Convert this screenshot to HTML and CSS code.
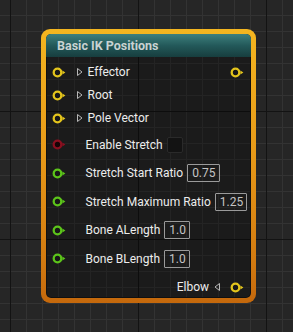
FILE: index.html
```html
<!DOCTYPE html>
<html>
    <head>
        <link rel="stylesheet" href="styles.css">
    </head>
    <body>
        <div class="node-frame">
            <div class="node">
                <div class="node-title">Basic IK Positions</div>
                <div class="node-pins">
                    <div class="pin-row">
                        <svg class="pin pin-vec" width="14" height="11" viewBox="0 0 14 11"><circle cx="5.5" cy="5.5" r="3.8" fill="#181818" stroke="currentColor" stroke-width="2.3"/><path d="M10.4 3.4 L13.4 5.5 L10.4 7.6 Z" fill="currentColor"/></svg>
                        <svg class="expander" width="6" height="8" viewBox="0 0 6 8"><path d="M0.5 0.5 L5 4 L0.5 7.5 Z" fill="none" stroke="#b8b8b8" stroke-width="1"/></svg>
                        <span class="label">Effector</span>
                        <svg class="pin pin-vec pin-out" width="14" height="11" viewBox="0 0 14 11"><circle cx="5.5" cy="5.5" r="3.8" fill="#181818" stroke="currentColor" stroke-width="2.3"/><path d="M10.4 3.4 L13.4 5.5 L10.4 7.6 Z" fill="currentColor"/></svg>
                    </div>
                    <div class="pin-row">
                        <svg class="pin pin-vec" width="14" height="11" viewBox="0 0 14 11"><circle cx="5.5" cy="5.5" r="3.8" fill="#181818" stroke="currentColor" stroke-width="2.3"/><path d="M10.4 3.4 L13.4 5.5 L10.4 7.6 Z" fill="currentColor"/></svg>
                        <svg class="expander" width="6" height="8" viewBox="0 0 6 8"><path d="M0.5 0.5 L5 4 L0.5 7.5 Z" fill="none" stroke="#b8b8b8" stroke-width="1"/></svg>
                        <span class="label">Root</span>
                    </div>
                    <div class="pin-row">
                        <svg class="pin pin-vec" width="14" height="11" viewBox="0 0 14 11"><circle cx="5.5" cy="5.5" r="3.8" fill="#181818" stroke="currentColor" stroke-width="2.3"/><path d="M10.4 3.4 L13.4 5.5 L10.4 7.6 Z" fill="currentColor"/></svg>
                        <svg class="expander" width="6" height="8" viewBox="0 0 6 8"><path d="M0.5 0.5 L5 4 L0.5 7.5 Z" fill="none" stroke="#b8b8b8" stroke-width="1"/></svg>
                        <span class="label">Pole Vector</span>
                    </div>
                    <div class="pin-row tall first-tall">
                        <svg class="pin pin-bool" width="14" height="11" viewBox="0 0 14 11"><circle cx="5.5" cy="5.5" r="3.8" fill="#160406" stroke="currentColor" stroke-width="2.3"/><path d="M10.4 3.4 L13.4 5.5 L10.4 7.6 Z" fill="currentColor"/></svg>
                        <span class="label plain">Enable Stretch</span>
                        <span class="check"></span>
                    </div>
                    <div class="pin-row tall">
                        <svg class="pin pin-float" width="14" height="11" viewBox="0 0 14 11"><circle cx="5.5" cy="5.5" r="3.8" fill="#181818" stroke="currentColor" stroke-width="2.3"/><path d="M10.4 3.4 L13.4 5.5 L10.4 7.6 Z" fill="currentColor"/></svg>
                        <span class="label plain">Stretch Start Ratio</span>
                        <span class="value">0.75</span>
                    </div>
                    <div class="pin-row tall">
                        <svg class="pin pin-float" width="14" height="11" viewBox="0 0 14 11"><circle cx="5.5" cy="5.5" r="3.8" fill="#181818" stroke="currentColor" stroke-width="2.3"/><path d="M10.4 3.4 L13.4 5.5 L10.4 7.6 Z" fill="currentColor"/></svg>
                        <span class="label plain">Stretch Maximum Ratio</span>
                        <span class="value">1.25</span>
                    </div>
                    <div class="pin-row tall">
                        <svg class="pin pin-float" width="14" height="11" viewBox="0 0 14 11"><circle cx="5.5" cy="5.5" r="3.8" fill="#181818" stroke="currentColor" stroke-width="2.3"/><path d="M10.4 3.4 L13.4 5.5 L10.4 7.6 Z" fill="currentColor"/></svg>
                        <span class="label plain">Bone ALength</span>
                        <span class="value">1.0</span>
                    </div>
                    <div class="pin-row tall">
                        <svg class="pin pin-float" width="14" height="11" viewBox="0 0 14 11"><circle cx="5.5" cy="5.5" r="3.8" fill="#181818" stroke="currentColor" stroke-width="2.3"/><path d="M10.4 3.4 L13.4 5.5 L10.4 7.6 Z" fill="currentColor"/></svg>
                        <span class="label plain">Bone BLength</span>
                        <span class="value">1.0</span>
                    </div>
                    <div class="pin-row out-row">
                        <span class="label">Elbow</span>
                        <svg class="collapser" width="6" height="8" viewBox="0 0 6 8"><path d="M5.5 0.5 L1 4 L5.5 7.5 Z" fill="none" stroke="#b8b8b8" stroke-width="1"/></svg>
                        <svg class="pin pin-vec" width="14" height="11" viewBox="0 0 14 11"><circle cx="5.5" cy="5.5" r="3.8" fill="#181818" stroke="currentColor" stroke-width="2.3"/><path d="M10.4 3.4 L13.4 5.5 L10.4 7.6 Z" fill="currentColor"/></svg>
                    </div>
                </div>
            </div>
        </div>
    </body>
</html>
```

FILE: styles.css
```css
* {
    font-family: Roboto, "Liberation Sans", sans-serif;
}

html {
    margin: 0;
}

body {
    margin: 0;
    padding: 29px 0 0 41px;
    width: 293px;
    height: 332px;
    box-sizing: border-box;
    overflow: hidden;
    background-color: #262626;
    background-image:
        linear-gradient(90deg, #131313 1px, transparent 1px),
        linear-gradient(#131313 1px, transparent 1px),
        linear-gradient(90deg, #333333 1px, transparent 1px),
        linear-gradient(#333333 1px, transparent 1px);
    background-size: 128px 128px, 128px 128px, 16px 16px, 16px 16px;
    background-position: 10px 0, 0 111px, 10px 0, 0 15px;
}

.node-frame {
    width: 215px;
    height: 274px;
    box-sizing: border-box;
    padding: 5px;
    border-radius: 9px;
    background: linear-gradient(#f4b620, #e89a18 45%, #d27a10 85%, #c4680c);
}

.node {
    height: 100%;
    border-radius: 5px;
    overflow: hidden;
    box-shadow: inset 0 0 0 1px #101010;
    background-color: #262626;
    background-image:
        linear-gradient(rgba(0, 0, 0, 0.3), rgba(0, 0, 0, 0.3)),
        linear-gradient(90deg, #131313 1px, transparent 1px),
        linear-gradient(#131313 1px, transparent 1px),
        linear-gradient(90deg, #333333 1px, transparent 1px),
        linear-gradient(#333333 1px, transparent 1px);
    background-size: 100% 100%, 128px 128px, 128px 128px, 16px 16px, 16px 16px;
    background-position: 0 0, 10px 0, 0 111px, 10px 0, 0 15px;
    background-attachment: fixed;
    display: flex;
    flex-direction: column;
}

.node-title {
    height: 23px;
    flex-shrink: 0;
    display: flex;
    align-items: center;
    padding-left: 11px;
    background: linear-gradient(#3e807d, #23595a 50%, #173e3e);
    color: #c8d3d2;
    font-size: 12.5px;
    font-weight: bold;
}

.node-pins {
    padding-top: 3.5px;
    display: flex;
    flex-direction: column;
}

.pin-row {
    height: 23px;
    display: flex;
    align-items: center;
    padding-left: 6px;
    padding-right: 7px;
    color: #ececec;
    font-size: 12px;
}

.pin-row.tall {
    height: 28.5px;
}

.pin-row.first-tall {
    margin-top: 1px;
}

.pin-row.out-row {
    height: 22px;
    margin-top: 3px;
    justify-content: flex-end;
}

.pin {
    flex-shrink: 0;
}

.pin-vec {
    color: #e3c41c;
}

.pin-bool {
    color: #8a0f1f;
}

.pin-float {
    color: #5cc41a;
}

.pin-out {
    margin-left: auto;
}

.expander {
    margin-left: 11px;
}

.label {
    margin-left: 4.5px;
    white-space: nowrap;
}

.label.plain {
    margin-left: 19.5px;
}

.out-row .label {
    margin-left: 0;
}

.collapser {
    margin-left: 5px;
    margin-right: 10px;
}

.check {
    width: 16px;
    height: 16px;
    box-sizing: border-box;
    margin-left: 4px;
    background: #131313;
    border: 1px solid #2a2a2a;
    border-radius: 2px;
}

.value {
    height: 18px;
    box-sizing: border-box;
    margin-left: 4px;
    padding: 0 3px 0 4px;
    border: 1px solid #9a9a9a;
    border-radius: 1px;
    color: #c4c4c4;
    font-size: 12px;
    line-height: 16px;
}
```
